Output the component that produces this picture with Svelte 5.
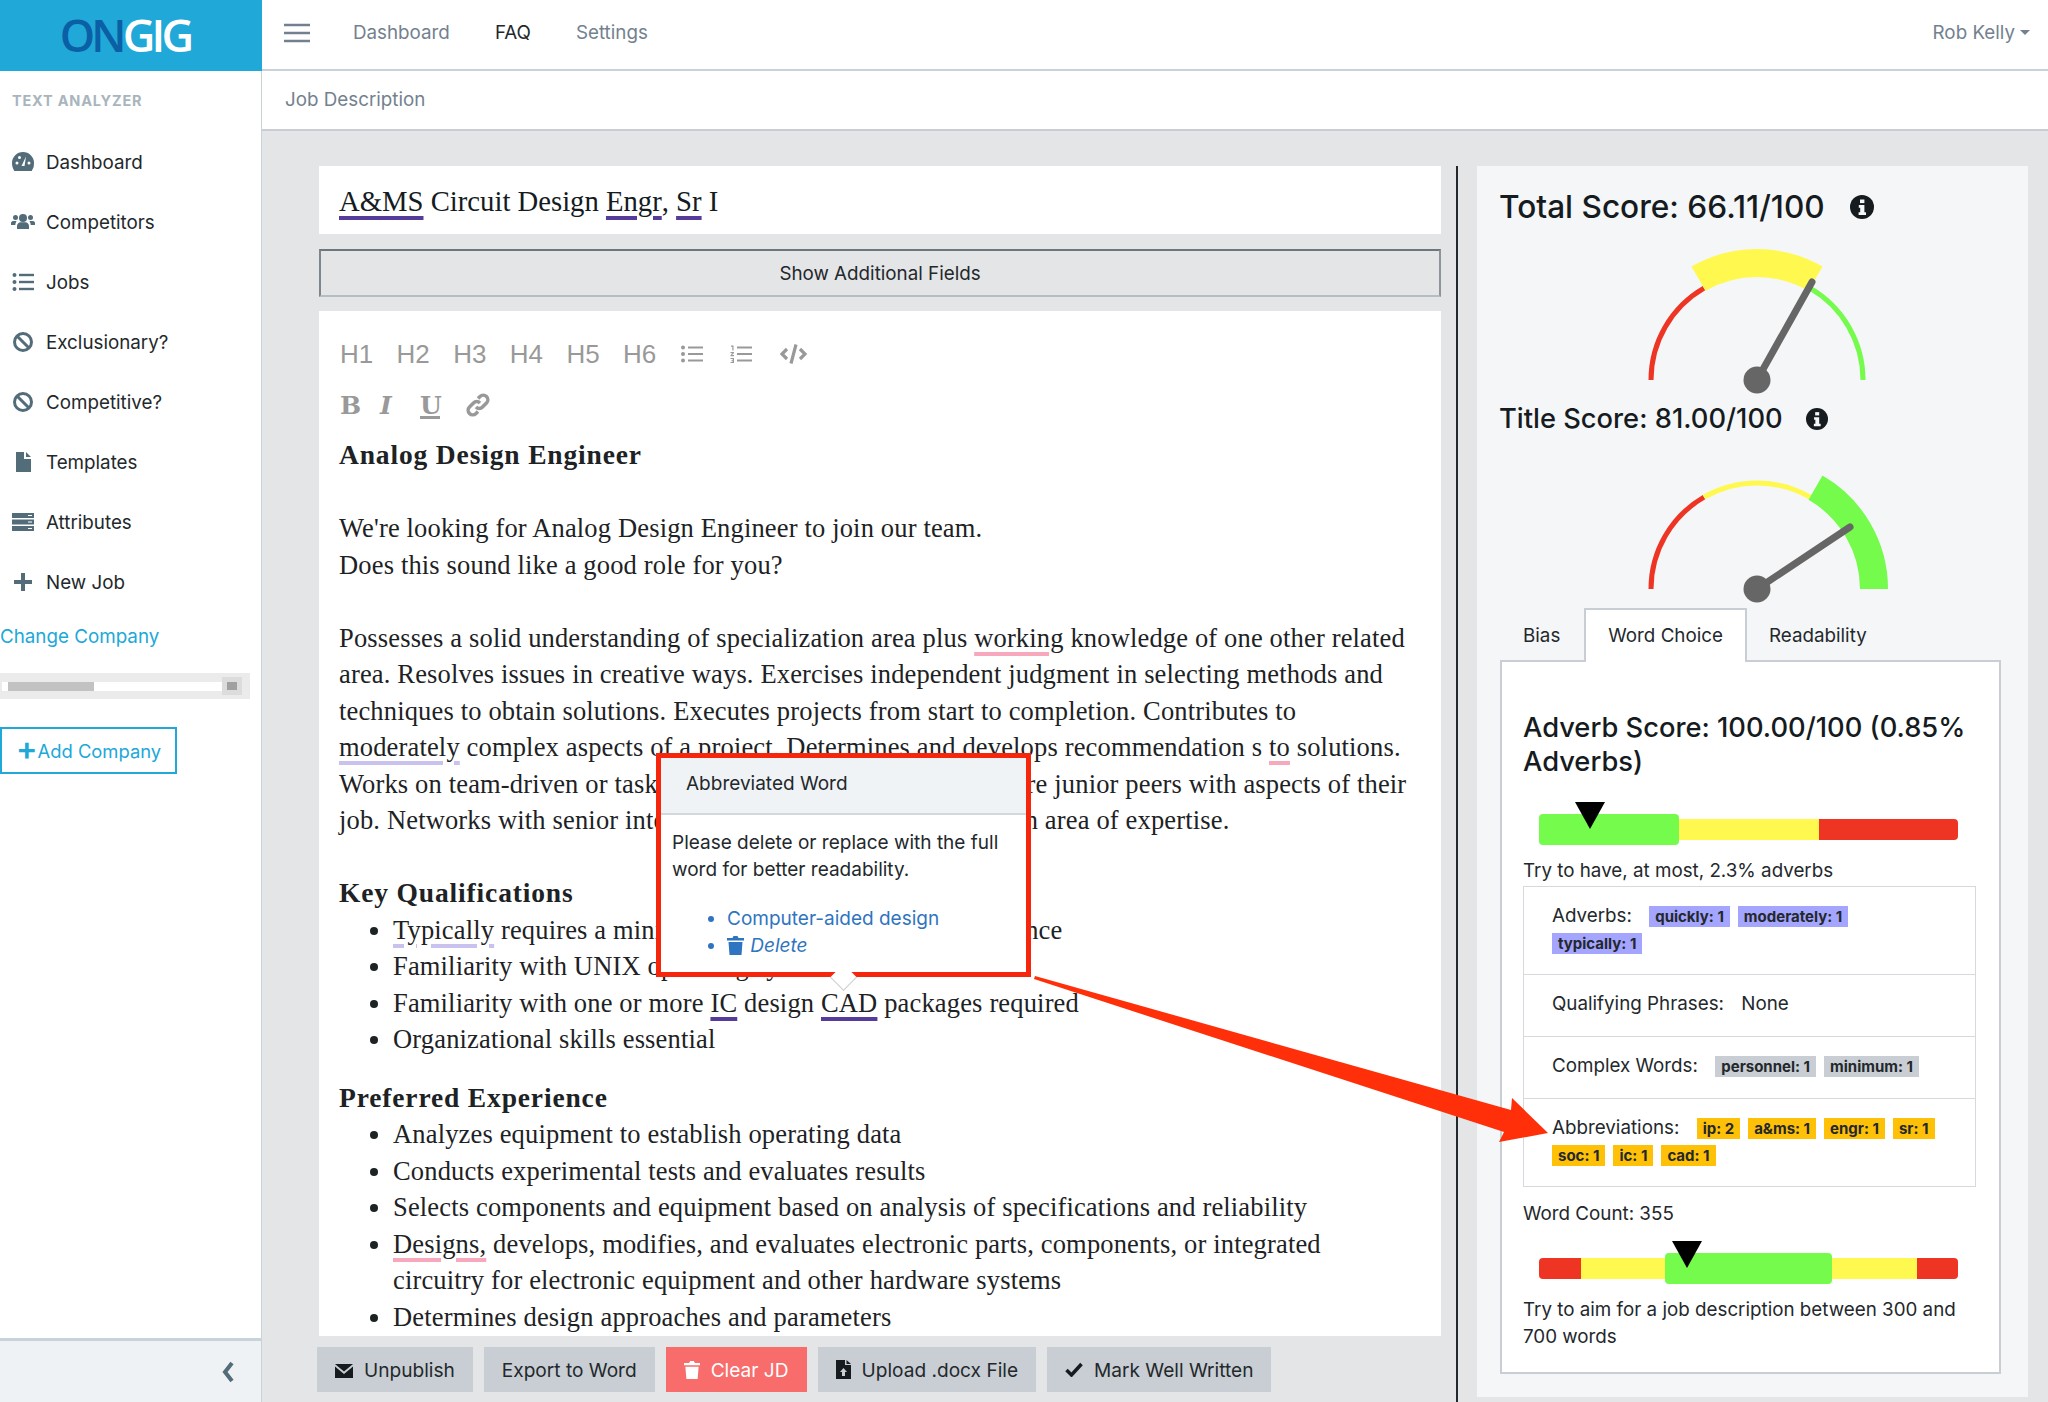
<script>
    const navItems = [
        { label: 'Dashboard', icon: 'gauge' },
        { label: 'Competitors', icon: 'users' },
        { label: 'Jobs', icon: 'list' },
        { label: 'Exclusionary?', icon: 'ban' },
        { label: 'Competitive?', icon: 'ban' },
        { label: 'Templates', icon: 'file' },
        { label: 'Attributes', icon: 'server' },
        { label: 'New Job', icon: 'plus' }
    ];

    const headings = ['H1', 'H2', 'H3', 'H4', 'H5', 'H6'];

    const adverbs = ['quickly: 1', 'moderately: 1'];
    const complexWords = ['personnel: 1', 'minimum: 1'];
    const abbreviations = ['ip: 2', 'a&ms: 1', 'engr: 1', 'sr: 1'];
    const abbreviations2 = ['soc: 1', 'ic: 1', 'cad: 1'];

    const CX = 135;
    const CY = 140;

    function arc(r, a0, a1) {
        const p = (a) => {
            const rad = (a * Math.PI) / 180;
            return `${(CX + r * Math.cos(rad)).toFixed(1)} ${(CY - r * Math.sin(rad)).toFixed(1)}`;
        };
        return `M${p(a0)} A${r} ${r} 0 0 1 ${p(a1)}`;
    }

    const gauges = [
        { active: 1, tip: [55, -98] },
        { active: 2, tip: [93, -62] }
    ];
    const segments = [
        { from: 180, to: 120, color: '#ee3524' },
        { from: 120, to: 60, color: '#fff94f' },
        { from: 60, to: 0, color: '#74fb4c' }
    ];
</script>

{#snippet gauge(g)}
    <svg class="gauge" width="270" height="156" viewBox="0 0 270 156">
        {#each segments as s, i}
            <path
                d={i === g.active ? arc(117, s.from, s.to) : arc(106, s.from, s.to)}
                fill="none"
                stroke={s.color}
                stroke-width={i === g.active ? 28 : 5}
            />
        {/each}
        <line x1={CX} y1={CY} x2={CX + g.tip[0]} y2={CY + g.tip[1]} stroke="#666" stroke-width="7" stroke-linecap="round" />
        <circle cx={CX} cy={CY} r="13.5" fill="#666" />
    </svg>
{/snippet}

{#snippet infoIcon(size)}
    <svg class="info" width={size} height={size} viewBox="0 0 24 24">
        <circle cx="12" cy="12" r="12" fill="#151b1e" />
        <rect x="10" y="4.5" width="4.4" height="3.6" fill="#f5f6f7" />
        <path d="M8.8 10h5.6v7.2h1.6V20H8.6v-2.8h1.6v-4.4H8.8z" fill="#f5f6f7" />
    </svg>
{/snippet}

{#snippet navIcon(name)}
    <svg class="nav-icon" width="24" height="24" viewBox="0 0 24 24" fill="#536c79">
        {#if name === 'gauge'}
            <path d="M12 2a11 11 0 0 0-11 11c0 3 .8 5.500 2.300 8h17.400a11 11 0 0 0 2.300-8A11 11 0 0 0 12 2z" />
            <circle cx="6" cy="13" r="1.5" fill="#fff" />
            <circle cx="8.500" cy="7.500" r="1.5" fill="#fff" />
            <circle cx="18" cy="13" r="1.5" fill="#fff" />
            <path d="M15 6.500l-1.500 9.500h-3z" fill="#fff" />
        {:else if name === 'users'}
            <circle cx="12" cy="8" r="4" />
            <circle cx="4.5" cy="7.5" r="2.5" />
            <circle cx="19.5" cy="7.5" r="2.5" />
            <path d="M6 19v-3c0-2.5 2-3.8 3.500-3.800h5c1.500 0 3.500 1.300 3.500 3.800v3z" />
            <path d="M0 15v-2c0-1 1-2 2-2h3.500l-1 2.500-.2 1.500zM24 15v-2c0-1-1-2-2-2h-3.500l1 2.500.2 1.500z" />
        {:else if name === 'list'}
            <circle cx="3.500" cy="5" r="2" />
            <circle cx="3.500" cy="12" r="2" />
            <circle cx="3.500" cy="19" r="2" />
            <rect x="8" y="3.800" width="15" height="2.400" />
            <rect x="8" y="10.800" width="15" height="2.400" />
            <rect x="8" y="17.800" width="15" height="2.400" />
        {:else if name === 'ban'}
            <circle cx="12" cy="12" r="8.500" fill="none" stroke="#536c79" stroke-width="3" />
            <line x1="6" y1="6" x2="18" y2="18" stroke="#536c79" stroke-width="3" />
        {:else if name === 'file'}
            <path d="M5 2h8v7h7v13H5zM15 2l5 5h-5z" />
        {:else if name === 'server'}
            <path d="M1 3h22v5H1zM1 9.500h22v5H1zM1 16h22v5H1z" />
            <rect x="17" y="5" width="4" height="1" fill="#fff" />
            <rect x="17" y="11.500" width="4" height="1" fill="#fff" />
            <rect x="17" y="18" width="4" height="1" fill="#fff" />
        {:else}
            <path d="M10 3h4v7h7v4h-7v7h-4v-7H3v-4h7z" />
        {/if}
    </svg>
{/snippet}

<div class="app">
    <aside class="sidebar">
        <div class="brand"><span class="on">ON</span><span class="gig">GIG</span></div>
        <div class="nav-title">TEXT ANALYZER</div>
        <ul class="nav">
            {#each navItems as item}
                <li>{@render navIcon(item.icon)}<span>{item.label}</span></li>
            {/each}
        </ul>
        <div class="change-company">Change Company</div>
        <div class="company-select">
            <span class="select-inner"><span class="blur-text"></span></span>
            <span class="blur-caret"></span>
        </div>
        <div class="add-company"><span class="add-plus">+</span>Add Company</div>
        <div class="sidebar-footer">
            <svg width="14" height="22" viewBox="0 0 14 22"><path d="M11 2 L4 11 L11 20" fill="none" stroke="#536c79" stroke-width="4" /></svg>
        </div>
    </aside>

    <div class="main">
        <header class="topbar">
            <svg class="burger" width="26" height="20" viewBox="0 0 26 20">
                <path d="M0 2h26M0 10h26M0 18h26" stroke="#73818f" stroke-width="2.500" />
            </svg>
            <nav class="top-links">
                <span>Dashboard</span>
                <span class="current">FAQ</span>
                <span>Settings</span>
            </nav>
            <div class="user">Rob Kelly<i class="caret"></i></div>
        </header>
        <div class="crumb">Job Description</div>

        <div class="content">
            <section class="left">
                <div class="title-card">
                    <span class="abbr">A&amp;MS</span> Circuit Design <span class="abbr">Engr</span>, <span class="abbr">Sr</span> I
                </div>
                <div class="fields-btn">Show Additional Fields</div>

                <div class="editor">
                    <div class="toolbar">
                        {#each headings as h}<span class="tb-h">{h}</span>{/each}
                        <span class="tb-cell">
                            <svg width="22" height="18" viewBox="0 0 22 18" fill="#999">
                                <circle cx="2" cy="2.500" r="2" /><circle cx="2" cy="9" r="2" /><circle cx="2" cy="15.500" r="2" />
                                <path d="M7 1.500h15v2H7zM7 8h15v2H7zM7 14.500h15v2H7z" />
                            </svg>
                        </span>
                        <span class="tb-cell">
                            <svg width="22" height="18" viewBox="0 0 22 18" fill="#999">
                                <path d="M1 .5h2.500v5H2.300V1.700H1zM.5 7h3.500v1l-2 2h2v1.200H.5v-1l2-2h-2zM.5 13h3.500v5H.5v-1h2.200v-.8h-1.200v-1h1.200V14H.5z" />
                                <path d="M7 1.500h15v2H7zM7 8h15v2H7zM7 14.500h15v2H7z" />
                            </svg>
                        </span>
                        <svg width="27" height="22" viewBox="0 0 27 22" fill="none" stroke="#999" stroke-width="3.200">
                            <path d="M7 6l-5 5 5 5M20 6l5 5-5 5M16 1.500l-5 19" />
                        </svg>
                    </div>
                    <div class="toolbar second">
                        <span class="tb-b">B</span>
                        <span class="tb-i">I</span>
                        <span class="tb-u">U</span>
                        <svg width="24" height="24" viewBox="0 0 24 24" fill="none" stroke="#999" stroke-width="3.500">
                            <path d="M10 14a4.500 4.500 0 0 0 6.500 0l4-4a4.500 4.500 0 0 0-6.500-6.500l-2 2" />
                            <path d="M14 10a4.500 4.500 0 0 0-6.500 0l-4 4a4.500 4.500 0 0 0 6.500 6.500l2-2" />
                        </svg>
                    </div>

                    <div class="doc">
                        <h3>Analog Design Engineer</h3>
                        <p class="gap">We're looking for Analog Design Engineer to join our team.<br />Does this sound like a good role for you?</p>
                        <p class="gap">
                            Possesses a solid understanding of specialization area plus <span class="pink">working</span> knowledge of one other related<br />
                            area. Resolves issues in creative ways. Exercises independent judgment in selecting methods and<br />
                            techniques to obtain solutions. Executes projects from start to completion. Contributes to<br />
                            <span class="lilac">moderately</span> complex aspects of a project. Determines and develops recommendation s <span class="pink">to</span> solutions.<br />
                            Works on team-driven or task-oriented projects and mentors more junior peers with aspects of their<br />
                            job. Networks with senior internal and external <span class="pink">personnel</span> in own area of expertise.
                        </p>
                        <h3>Key Qualifications</h3>
                        <ul class="short-gap">
                            <li><span class="lilac">Typically</span> requires a minimum of 3 years of related experience</li>
                            <li>Familiarity with UNIX operating systems and tools</li>
                            <li>Familiarity with one or more <span class="abbr">IC</span> design <span class="abbr">CAD</span> packages required</li>
                            <li>Organizational skills essential</li>
                        </ul>
                        <h3>Preferred Experience</h3>
                        <ul>
                            <li>Analyzes equipment to establish operating data</li>
                            <li>Conducts experimental tests and evaluates results</li>
                            <li>Selects components and equipment based on analysis of specifications and reliability</li>
                            <li><span class="pink">Designs,</span> develops, modifies, and evaluates electronic parts, components, or integrated<br />circuitry for electronic equipment and other hardware systems</li>
                            <li>Determines design approaches and parameters</li>
                        </ul>
                    </div>

                    <div class="popover">
                        <div class="pop-head">Abbreviated Word</div>
                        <div class="pop-body">
                            Please delete or replace with the full<br />word for better readability.
                            <ul>
                                <li>Computer-aided design</li>
                                <li>
                                    <svg width="17" height="20" viewBox="0 0 17 20" fill="#2f74c0"><path d="M0 3h5.500l1-2h4l1 2H17v2.500H0zM1.500 7h14l-1 13h-12z" /></svg>
                                    <em>Delete</em>
                                </li>
                            </ul>
                        </div>
                        <i class="pop-arrow"></i>
                    </div>
                </div>

                <div class="actions">
                    <button>
                        <svg width="18" height="16" viewBox="0 0 18 16" fill="#151b1e"><path d="M0 2h18L9 9.500zM0 4.500V16h18V4.500L9 12z" /></svg>
                        Unpublish
                    </button>
                    <button>Export to Word</button>
                    <button class="danger">
                        <svg width="16" height="19" viewBox="0 0 17 20" fill="#fff"><path d="M0 3h5.500l1-2h4l1 2H17v2.500H0zM1.500 7h14l-1 13h-12z" /></svg>
                        Clear JD
                    </button>
                    <button>
                        <svg width="15" height="19" viewBox="0 0 15 19" fill="#151b1e"><path d="M0 0h9v5h6v14H0zM10.500 0L15 4h-4.500z" /><path d="M7.500 8l3.500 4H9v4H6v-4H4z" fill="#c8ced3" /></svg>
                        Upload .docx File
                    </button>
                    <button>
                        <svg width="18" height="15" viewBox="0 0 18 15" fill="none" stroke="#151b1e" stroke-width="3.500"><path d="M1.500 8l5 5L16.500 2" /></svg>
                        Mark Well Written
                    </button>
                </div>
            </section>

            <div class="divider"></div>

            <section class="score-panel">
                <h2 class="total">Total Score: 66.11/100 {@render infoIcon(24)}</h2>
                {@render gauge(gauges[0])}
                <h2 class="title-score">Title Score: 81.00/100 {@render infoIcon(22)}</h2>
                {@render gauge(gauges[1])}

                <div class="tabs">
                    <span class="tab">Bias</span>
                    <span class="tab active">Word Choice</span>
                    <span class="tab">Readability</span>
                </div>
                <div class="tab-card">
                    <h3 class="adverb-title">Adverb Score: 100.00/100 (0.85% Adverbs)</h3>
                    <div class="bar adverb-bar">
                        <i class="seg green big" style="flex: 140"></i>
                        <i class="seg yellow" style="flex: 140"></i>
                        <i class="seg red end" style="flex: 139"></i>
                        <b class="marker" style="left: 36px"></b>
                    </div>
                    <div class="hint">Try to have, at most, 2.3% adverbs</div>
                    <div class="word-list">
                        <div class="row">
                            <span class="row-label">Adverbs:</span>
                            {#each adverbs as a}<span class="badge purple">{a}</span>{/each}
                            <br /><span class="badge purple">typically: 1</span>
                        </div>
                        <div class="row"><span class="row-label">Qualifying Phrases:</span> None</div>
                        <div class="row">
                            <span class="row-label">Complex Words:</span>
                            {#each complexWords as c}<span class="badge grey">{c}</span>{/each}
                        </div>
                        <div class="row">
                            <span class="row-label">Abbreviations:</span>
                            {#each abbreviations as a}<span class="badge amber">{a}</span>{/each}
                            <br />
                            {#each abbreviations2 as a}<span class="badge amber">{a}</span>{/each}
                        </div>
                    </div>
                    <div class="word-count">Word Count: 355</div>
                    <div class="bar count-bar">
                        <i class="seg red start" style="flex: 42"></i>
                        <i class="seg yellow" style="flex: 84"></i>
                        <i class="seg green big" style="flex: 167"></i>
                        <i class="seg yellow" style="flex: 85"></i>
                        <i class="seg red end" style="flex: 41"></i>
                        <b class="marker" style="left: 133px"></b>
                    </div>
                    <div class="hint">Try to aim for a job description between 300 and<br />700 words</div>
                </div>
            </section>
        </div>
    </div>

    <svg class="callout" width="2048" height="1402" viewBox="0 0 2048 1402">
        <path d="M1035 976 L1511 1110 L1512 1098 L1548 1133 L1499 1142 L1504 1132 L1034 979 Z" fill="#ff2f0a" />
    </svg>
</div>

<style>
    :global(body) {
        margin: 0;
        background: #e4e5e6;
    }

    .app {
        position: relative;
        display: flex;
        width: 2048px;
        height: 1402px;
        overflow: hidden;
        font-family: Inter, "Liberation Sans", sans-serif;
        color: #23282c;
        font-size: 18.800px;
    }

    .sidebar {
        width: 262px;
        flex-shrink: 0;
        display: flex;
        flex-direction: column;
        background: #fff;
        border-right: 1px solid #c8d2d9;
        box-sizing: border-box;
    }

    .brand {
        height: 71px;
        flex-shrink: 0;
        margin-right: -1px;
        background: #20a8d8;
        display: flex;
        align-items: center;
        justify-content: center;
        padding: 0 12px 3px 0;
        box-sizing: border-box;
        font-family: "Open Sans", sans-serif;
        font-size: 45px;
        font-weight: 600;
        letter-spacing: -3.800px;
    }
    .on { color: #0b5fa5; }
    .gig { color: #fff; }

    .nav-title {
        margin: 20px 0 0 12px;
        font-size: 14.500px;
        font-weight: 700;
        letter-spacing: 0.8px;
        color: #a9b5bd;
        line-height: 20px;
    }

    .nav {
        list-style: none;
        margin: 21px 0 0;
        padding: 0;
    }
    .nav li {
        height: 60px;
        display: flex;
        align-items: center;
        padding-left: 11px;
        gap: 11px;
        color: #23282c;
    }

    .change-company {
        color: #20a8d8;
        line-height: 28px;
        margin-top: 11px;
    }

    .company-select {
        height: 26px;
        margin: 22px 11px 0 0;
        box-sizing: border-box;
        background: #ebebeb;
        display: flex;
        align-items: center;
        padding: 0 8px 0 2px;
    }
    .select-inner {
        flex: 1;
        height: 9px;
        background: #fff;
        display: flex;
        align-items: center;
    }
    .blur-text {
        width: 86px;
        height: 9px;
        margin-left: 6px;
        background: #c2c2c2;
    }
    .blur-caret {
        width: 20px;
        height: 18px;
        background: #dcdcdc;
        display: block;
        box-shadow: inset 0 0 0 5px #dcdcdc, inset 0 0 0 10px #a0a0a0;
    }

    .add-company {
        width: 177px;
        height: 47px;
        margin-top: 28px;
        box-sizing: border-box;
        border: 2px solid #20a8d8;
        color: #20a8d8;
        display: flex;
        align-items: center;
        padding-left: 14px;
        font-size: 18.400px;
    }
    .add-plus {
        font-size: 32px;
        font-weight: 600;
        line-height: 1;
        margin-top: -3px;
    }

    .sidebar-footer {
        margin-top: auto;
        height: 64px;
        box-sizing: border-box;
        background: #eef2f5;
        border-top: 3px solid #c8d2d9;
        display: flex;
        align-items: center;
        justify-content: flex-end;
        padding-right: 26px;
    }

    .main {
        flex: 1;
        min-width: 0;
        display: flex;
        flex-direction: column;
    }

    .topbar {
        height: 71px;
        flex-shrink: 0;
        box-sizing: border-box;
        background: #fff;
        border-bottom: 2px solid #c8d2d9;
        display: flex;
        align-items: center;
        padding: 0 18px 4px 22px;
        color: #73818f;
    }
    .top-links {
        display: flex;
        gap: 45px;
        margin-left: 43px;
    }
    .current { color: #23282c; }
    .user {
        margin-left: auto;
        display: flex;
        align-items: center;
        gap: 5px;
    }
    .caret {
        border-top: 5px solid #73818f;
        border-left: 5px solid transparent;
        border-right: 5px solid transparent;
    }

    .crumb {
        height: 60px;
        flex-shrink: 0;
        box-sizing: border-box;
        background: #fff;
        border-bottom: 2px solid #c8ced3;
        padding: 0 0 2px 23px;
        display: flex;
        align-items: center;
        color: #73818f;
    }

    .content {
        flex: 1;
        min-height: 0;
        display: flex;
        padding: 35px 20px 5px 57px;
    }

    .left {
        width: 1122px;
        display: flex;
        flex-direction: column;
        flex-shrink: 0;
    }

    .title-card {
        height: 68px;
        box-sizing: border-box;
        background: #fff;
        padding: 3px 20px 0;
        display: flex;
        align-items: center;
        white-space: pre;
        font-family: "Liberation Serif", serif;
        font-size: 28.700px;
        color: #151b1e;
    }

    .abbr {
        text-decoration: underline 4px #553c9a;
        text-underline-offset: 5px;
    }
    .pink {
        text-decoration: underline 4px #f7a8bc;
        text-underline-offset: 5px;
    }
    .lilac {
        text-decoration: underline 4px #c9c2ef;
        text-underline-offset: 5px;
    }

    .fields-btn {
        height: 48px;
        margin-top: 15px;
        box-sizing: border-box;
        border: 2px solid #7d868c;
        border-top-color: #6d767c;
        border-bottom-color: #b6bcc1;
        border-right-color: #8d959a;
        display: flex;
        align-items: center;
        justify-content: center;
        color: #23282c;
    }

    .editor {
        position: relative;
        height: 1025px;
        margin-top: 14px;
        background: #fff;
        overflow: hidden;
        padding: 24px 20px 0 21px;
        box-sizing: border-box;
    }

    .toolbar {
        display: flex;
        align-items: center;
        height: 38px;
        color: #999;
    }
    .toolbar.second {
        margin-top: 13px;
        height: 38px;
    }
    .tb-h {
        font-family: "Liberation Sans", sans-serif;
        font-size: 26px;
        width: 56.600px;
        flex-shrink: 0;
    }
    .tb-h:nth-child(6) { width: 58px; }
    .tb-cell {
        width: 49.500px;
        display: flex;
    }
    .tb-b, .tb-i, .tb-u {
        font-family: "DejaVu Serif", serif;
        font-size: 25px;
        font-weight: 700;
        width: 40px;
        flex-shrink: 0;
    }
    .tb-i { font-style: italic; width: 40px; }
    .tb-u {
        width: 46px;
        display: flex;
        flex-direction: column;
    }
    .tb-u::after {
        content: '';
        width: 20px;
        border-bottom: 3px solid #999;
        margin-top: -4px;
    }

    .doc {
        font-family: "Liberation Serif", serif;
        font-size: 26.500px;
        line-height: 36.500px;
        letter-spacing: 0.16px;
        color: #1d2225;
        margin-top: 13px;
        margin-left: -1px;
        white-space: nowrap;
    }
    .doc h3 {
        margin: 0;
        font-size: 27.500px;
        line-height: 36.500px;
        letter-spacing: 0.85px;
        font-weight: 700;
    }
    .doc p {
        margin: 0;
    }
    .doc .gap {
        margin-bottom: 36.500px;
    }
    .doc p:first-of-type {
        margin-top: 36.500px;
    }
    .doc ul {
        margin: 0;
        padding-left: 54px;
    }
    .doc .short-gap {
        margin-bottom: 22px;
    }

    .popover {
        position: absolute;
        z-index: 1;
        left: 337px;
        top: 442px;
        width: 375px;
        height: 224px;
        box-sizing: border-box;
        border: 5px solid #f5260b;
        background: #fff;
        font-size: 19px;
        line-height: 27px;
        color: #23282c;
    }
    .pop-head {
        height: 57px;
        box-sizing: border-box;
        background: #f0f3f5;
        border-bottom: 2px solid #d3d8dc;
        padding: 12px 0 0 25px;
    }
    .pop-body {
        padding: 14px 11px;
    }
    .pop-body ul {
        margin: 22px 0 0;
        padding-left: 55px;
        color: #2f74c0;
    }
    .pop-body li svg {
        vertical-align: -3px;
    }
    .pop-body em {
        margin-left: 1px;
    }
    .pop-arrow {
        position: absolute;
        z-index: -1;
        left: 173px;
        bottom: -15px;
        width: 18px;
        height: 18px;
        background: #fff;
        border-right: 1px solid #c8ced3;
        border-bottom: 1px solid #c8ced3;
        transform: rotate(45deg);
    }

    .actions {
        display: flex;
        gap: 11px;
        margin: 11px 0 0 -2px;
    }
    .actions button {
        height: 45px;
        padding: 0 18px;
        border: 0;
        background: #c8ced3;
        font: inherit;
        font-size: 19.100px;
        color: #23282c;
        display: flex;
        align-items: center;
        gap: 11px;
        white-space: nowrap;
    }
    .actions .danger {
        background: #f86c6b;
        color: #fff;
    }

    .divider {
        width: 2px;
        flex-shrink: 0;
        margin: 0 19px -5px 15px;
        background: #23282c;
    }

    .score-panel {
        width: 551px;
        flex-shrink: 0;
        box-sizing: border-box;
        background: #f5f6f7;
        padding: 19px 27px 0 22px;
    }

    .total {
        margin: 0;
        font-size: 31.600px;
        font-weight: 500;
        line-height: 44px;
        display: flex;
        align-items: center;
        gap: 25px;
        color: #151b1e;
    }
    .title-score {
        margin: 4px 0 0;
        font-size: 27.300px;
        font-weight: 500;
        line-height: 38px;
        display: flex;
        align-items: center;
        gap: 23px;
        color: #151b1e;
    }

    .gauge {
        display: block;
        margin: 11px 0 0 123px;
    }

    .tabs {
        display: flex;
        margin-top: 3px;
        height: 54px;
        margin-bottom: -2px;
        position: relative;
    }
    .tab {
        padding: 0 22px 2px;
        box-sizing: border-box;
        display: flex;
        align-items: center;
        border: 2px solid transparent;
        border-bottom: 0;
        color: #23282c;
    }
    .tab.active {
        background: #fff;
        border-color: #c8ced3;
    }
    .tab.active + .tab {
        padding-left: 20px;
    }

    .tab-card {
        width: 501px;
        height: 714px;
        margin-left: 1px;
        box-sizing: border-box;
        background: #fff;
        border: 2px solid #c8ced3;
        padding: 49px 21px 0;
    }
    .adverb-title {
        margin: 0;
        font-size: 27.300px;
        font-weight: 500;
        line-height: 34px;
        color: #151b1e;
    }

    .bar {
        position: relative;
        display: flex;
        align-items: center;
        width: 419px;
        height: 31px;
        margin-left: 16px;
    }
    .adverb-bar { margin-top: 35px; }
    .count-bar { margin-top: 26px; }
    .seg {
        display: block;
        height: 21px;
    }
    .big {
        height: 31px;
        border-radius: 4px;
        position: relative;
    }
    .green { background: #74fb4c; }
    .yellow { background: #fff94f; }
    .red { background: #ee3524; }
    .start { border-radius: 4px 0 0 4px; }
    .end { border-radius: 0 4px 4px 0; }
    .marker {
        position: absolute;
        top: -12px;
        width: 0;
        height: 0;
        border-top: 27px solid #000;
        border-left: 15.500px solid transparent;
        border-right: 15.500px solid transparent;
    }

    .hint {
        margin-top: 12px;
        line-height: 27px;
        color: #23282c;
    }

    .word-list {
        margin-top: 2px;
        border: 1px solid #d6dade;
        border-bottom: 0;
        width: 453px;
        box-sizing: border-box;
    }
    .row {
        padding: 15px 10px 19px 28px;
        line-height: 27px;
        border-bottom: 1px solid #d6dade;
    }
    .row:first-child {
        padding-bottom: 18px;
    }
    .row:last-child {
        padding-bottom: 18px;
    }
    .row-label {
        margin-right: 12px;
    }
    .badge {
        display: inline-block;
        font-size: 15px;
        font-weight: 700;
        line-height: 21px;
        padding: 0 6px;
        margin-right: 8px;
        color: #23282c;
    }
    .purple { background: #a4a5ff; }
    .grey { background: #c8ced3; }
    .amber { background: #ffc107; }

    .word-count {
        margin-top: 13px;
        line-height: 27px;
    }

    .callout {
        position: absolute;
        left: 0;
        top: 0;
        pointer-events: none;
    }
</style>
